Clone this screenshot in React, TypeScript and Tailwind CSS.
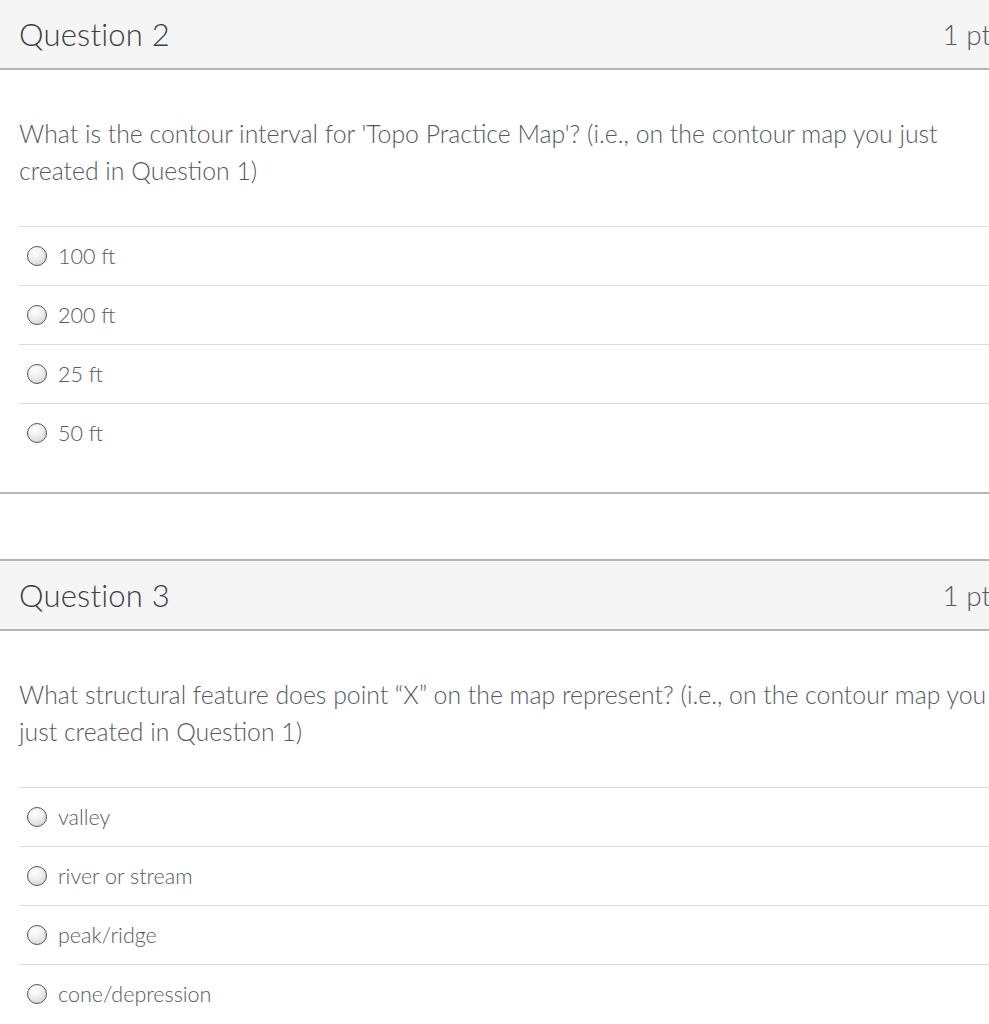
import React from 'react';

interface QuestionProps {
  number: number;
  points: string;
  text: string;
  answers: string[];
  first?: boolean;
}

const Radio: React.FC = () => (
  <span className="inline-block w-[20px] h-[20px] rounded-full border border-[#555] bg-[radial-gradient(circle_at_40%_30%,#ffffff_0%,#f0f0f0_40%,#c9c9c9_100%)] shrink-0" />
);

const Question: React.FC<QuestionProps> = ({ number, points, text, answers, first }) => (
  <div className={`w-[1022px] border-t-2 border-b-2 border-[#b4b4b4] ${first ? '-mt-[2px]' : 'mt-[65px]'}`}>
    <div className="h-[70px] bg-[#f5f5f5] border-b-2 border-[#b4b4b4] flex items-center justify-between px-[19px]">
      <h2 className="text-[31px] font-light text-[#3a3f44] tracking-[0.2px]">Question {number}</h2>
      <span className="text-[28px] font-light text-[#55595c]">{points}</span>
    </div>
    <div className="pl-[19px] pr-[26px] pt-[45px] pb-[30px]">
      <p className="text-[24.8px] font-light leading-[37px] text-[#555a5e]">{text}</p>
      <div className="mt-[37px]">
        {answers.map((a) => (
          <div key={a} className="h-[59px] border-t border-[#dcdcdc] flex items-center pl-[8px] gap-[11px]">
            <Radio />
            <span className="text-[21.5px] font-light text-[#555a5e]">{a}</span>
          </div>
        ))}
      </div>
    </div>
  </div>
);

export default function App() {
  return (
    <div className="w-[989px] h-[1024px] overflow-hidden bg-white font-['Lato','Noto_Sans',sans-serif]">
      <Question
        first
        number={2}
        points="1 pts"
        text="What is the contour interval for 'Topo Practice Map'? (i.e., on the contour map you just created in Question 1)"
        answers={['100 ft', '200 ft', '25 ft', '50 ft']}
      />
      <Question
        number={3}
        points="1 pts"
        text="What structural feature does point “X” on the map represent? (i.e., on the contour map you just created in Question 1)"
        answers={['valley', 'river or stream', 'peak/ridge', 'cone/depression']}
      />
    </div>
  );
}
